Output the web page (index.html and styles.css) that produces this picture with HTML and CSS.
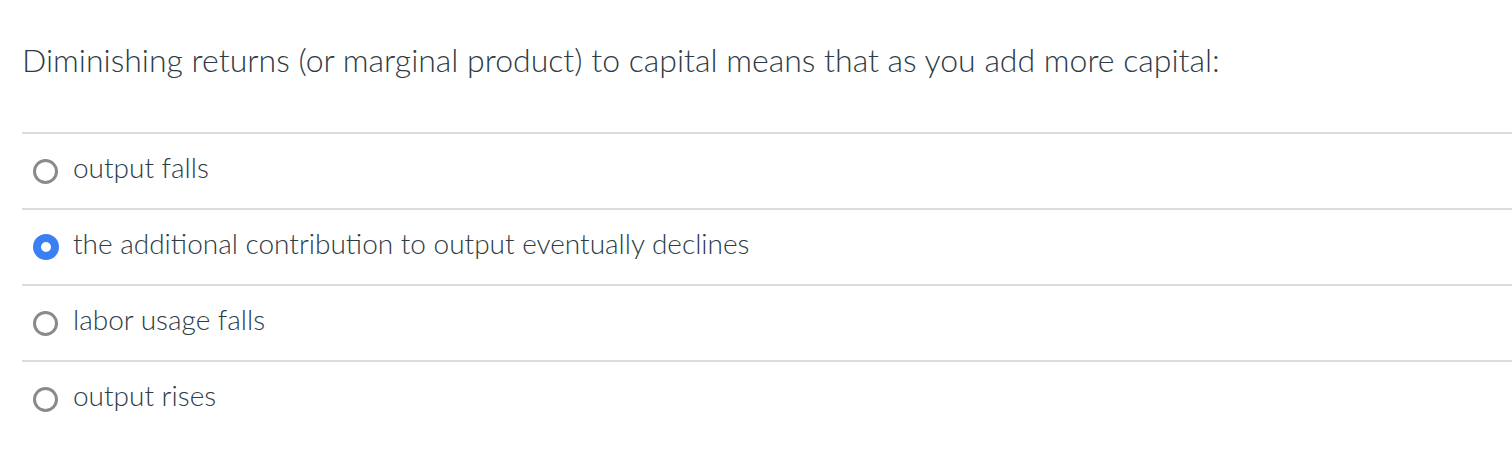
FILE: index.html
```html
<!DOCTYPE html>
<html>
<head>
<meta charset="utf-8">
<link rel="stylesheet" href="styles.css">
</head>
<body>
<div class="quiz">
  <div class="question">Diminishing returns (or marginal product) to capital means that as you add more capital:</div>
  <ul class="answers">
    <li class="answer"><span class="radio"></span><span class="label">output falls</span></li>
    <li class="answer"><span class="radio checked"></span><span class="label">the additional contribution to output eventually declines</span></li>
    <li class="answer"><span class="radio"></span><span class="label">labor usage falls</span></li>
    <li class="answer"><span class="radio"></span><span class="label">output rises</span></li>
  </ul>
</div>
</body>
</html>
```
FILE: styles.css
```css
html, body {
  margin: 0;
  padding: 0;
  background: #ffffff;
}
body {
  font-family: Lato, "Liberation Sans", sans-serif;
  font-weight: 300;
  color: #2d3b45;
}
.quiz {
  padding-left: 22px;
}
.question {
  font-size: 32px;
  line-height: 38px;
  padding-top: 41px;
  height: 91px;
}
.answers {
  list-style: none;
  margin: 0;
  padding: 0;
}
.answer {
  display: flex;
  align-items: center;
  height: 74px;
  border-top: 2px solid #dcdcdc;
  font-size: 28px;
}
.radio {
  box-sizing: border-box;
  width: 25px;
  height: 25px;
  border-radius: 50%;
  border: 3px solid #8a8a8a;
  margin-left: 11px;
  margin-right: 15px;
  flex: none;
}
.radio.checked {
  width: 26px;
  height: 26px;
  border: 8.5px solid #3b7ff5;
  background: #ffffff;
  margin-left: 10.5px;
  margin-right: 14.5px;
}
.label {
  line-height: 30px;
  margin-top: -8px;
}
```
